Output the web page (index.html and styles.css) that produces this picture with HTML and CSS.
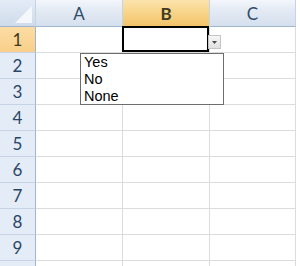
FILE: index.html
```html
<!DOCTYPE html>
<html>
<head>
<meta charset="utf-8">
<link rel="stylesheet" href="styles.css">
</head>
<body>
<div class="sheet">
  <div class="grid">
    <div class="corner"><span class="tri"></span></div>
    <div class="colhead">A</div>
    <div class="colhead sel">B</div>
    <div class="colhead">C</div>
    <div class="fill"></div>

    <div class="rowhead sel">1</div><div class="cell"></div><div class="cell active"></div><div class="cell"></div><div class="fill"></div>
    <div class="rowhead">2</div><div class="cell"></div><div class="cell"></div><div class="cell"></div><div class="fill"></div>
    <div class="rowhead">3</div><div class="cell"></div><div class="cell"></div><div class="cell"></div><div class="fill"></div>
    <div class="rowhead">4</div><div class="cell"></div><div class="cell"></div><div class="cell"></div><div class="fill"></div>
    <div class="rowhead">5</div><div class="cell"></div><div class="cell"></div><div class="cell"></div><div class="fill"></div>
    <div class="rowhead">6</div><div class="cell"></div><div class="cell"></div><div class="cell"></div><div class="fill"></div>
    <div class="rowhead">7</div><div class="cell"></div><div class="cell"></div><div class="cell"></div><div class="fill"></div>
    <div class="rowhead">8</div><div class="cell"></div><div class="cell"></div><div class="cell"></div><div class="fill"></div>
    <div class="rowhead">9</div><div class="cell"></div><div class="cell"></div><div class="cell"></div><div class="fill"></div>
    <div class="rowhead"></div><div class="cell"></div><div class="cell"></div><div class="cell"></div><div class="fill"></div>
  </div>
  <div class="dropbtn"><svg width="5" height="3" viewBox="0 0 5 3"><path d="M0 0H5L2.5 3Z" fill="#4a4a4a"/></svg></div>
  <ul class="list">
    <li>Yes</li>
    <li>No</li>
    <li>None</li>
  </ul>
</div>
</body>
</html>
```

FILE: styles.css
```css
html, body {
  margin: 0;
  padding: 0;
  background: #fff;
}
.sheet {
  position: relative;
  width: 300px;
  height: 266px;
  overflow: hidden;
  font-family: Lato, "Liberation Sans", sans-serif;
}
.grid {
  display: grid;
  grid-template-columns: 36px 87px 87px 86px 4px;
  grid-template-rows: 27px repeat(10, 26px);
}
.corner {
  position: relative;
  background: linear-gradient(#e3ebf6, #cfdbeb);
  border-right: 1px solid #c5d3e4;
  border-bottom: 1px solid #9eb6ce;
  box-sizing: border-box;
}
.tri {
  position: absolute;
  right: 3px;
  bottom: 3px;
  width: 0;
  height: 0;
  border-left: 17px solid transparent;
  border-bottom: 17px solid #f4f7fb;
}
.colhead {
  background: linear-gradient(#f3f6fb 0%, #e2e9f3 45%, #d5e0ee 100%);
  border-right: 1px solid #c5d3e4;
  border-bottom: 1px solid #9eb6ce;
  box-sizing: border-box;
  display: flex;
  align-items: center;
  justify-content: center;
  font-size: 17px;
  color: #2f4b6b;
}
.colhead.sel {
  background: linear-gradient(#fbe3ad 0%, #f8d58c 45%, #f2c469 100%);
  border-bottom-color: #c29d4f;
  color: #3f3a20;
  font-weight: bold;
}
.rowhead {
  background: #e4ecf7;
  border-right: 1px solid #9eb6ce;
  border-bottom: 1px solid #c5d3e4;
  box-sizing: border-box;
  display: flex;
  align-items: center;
  justify-content: center;
  font-size: 17px;
  color: #2a4566;
}
.rowhead.sel {
  background: linear-gradient(#fcdca4, #f9d08a);
  color: #3f3a20;
}
.cell {
  border-right: 1px solid #dadcdd;
  border-bottom: 1px solid #dadcdd;
  box-sizing: border-box;
  background: #fff;
}
.cell.active {
  box-shadow: inset 0 0 0 2px #000;
  margin: -1px 0 0 -1px;
}
.fill {
  background: #fff;
}
.dropbtn {
  position: absolute;
  left: 208px;
  top: 35px;
  width: 13px;
  height: 14px;
  box-sizing: border-box;
  border: 1px solid #c4c4c4;
  background: linear-gradient(#f6f6f6, #e0e0e0);
  display: flex;
  align-items: center;
  justify-content: center;
}
.list {
  position: absolute;
  left: 80px;
  top: 53px;
  width: 144px;
  height: 52px;
  box-sizing: border-box;
  margin: 0;
  padding: 0 0 0 3px;
  list-style: none;
  background: #fff;
  border: 1px solid #6d6d6d;
  font-family: "Liberation Sans", Arial, sans-serif;
  font-size: 14.5px;
  line-height: 17px;
  color: #000;
}
```
